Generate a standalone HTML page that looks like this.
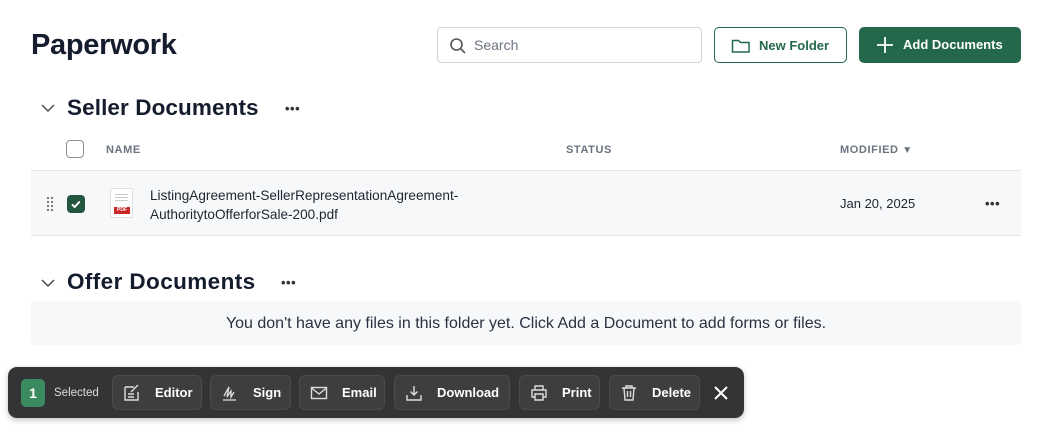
<!DOCTYPE html>
<html><head><meta charset="utf-8"><style>
*{box-sizing:border-box;margin:0;padding:0}
body{width:1051px;height:439px;background:#fff;font-family:"Liberation Sans",sans-serif;color:#1a2233;position:relative;overflow:hidden}
.a{position:absolute}
h1{position:absolute;left:31px;top:29px;font-size:29px;font-weight:600;letter-spacing:-0.3px;color:#141c2e}
.search{left:437px;top:27px;width:265px;height:36px;border:1px solid #d0d4da;border-radius:4px}
.search span{position:absolute;left:36px;top:9px;font-size:14px;color:#6b7280}
.nf{left:714px;top:27px;width:133px;height:36px;border:1px solid #23684a;border-radius:5px;color:#23684a;font-size:13px;font-weight:bold}
.ad{left:859px;top:27px;width:162px;height:36px;background:#23684a;border-radius:5px;color:#fff;font-size:13px;font-weight:bold}
.sec{font-size:22.5px;font-weight:600;color:#141c2e}
.hdr{font-size:11px;color:#6b7280;font-weight:bold;letter-spacing:0.6px}
.row{left:31px;top:170px;width:990px;height:66px;background:#f7f8fa;border-top:1px solid #e5e7eb;border-bottom:1px solid #e5e7eb}
.empty{left:31px;top:301px;width:990px;height:44px;background:#f7f8fa;border-radius:4px;font-size:16px;color:#2a3140;text-align:center;line-height:46px}
.bar{left:8px;top:367px;width:736px;height:51px;background:#333436;border-radius:9px;box-shadow:0 2px 6px rgba(0,0,0,.25)}
.btn{position:absolute;top:8px;height:35px;background:#3d3e40;border:1px solid #4a4b4d;border-radius:6px;color:#fff;font-size:13px;font-weight:bold;display:flex;align-items:center}
.btn svg{margin-left:10px;margin-right:14px}
.dots{font-size:13px;font-weight:bold;color:#333;letter-spacing:0.5px}
</style></head><body>
<h1>Paperwork</h1>
<div class="a search"><svg class="a" style="left:11px;top:9px" width="18" height="18" viewBox="0 0 18 18" fill="none" stroke="#555" stroke-width="1.6"><circle cx="7.5" cy="7.5" r="5.5"/><path d="M11.5 11.5l4.5 4.5"/></svg><span>Search</span></div>
<div class="a nf"><svg class="a" style="left:16px;top:10px" width="20" height="16" viewBox="0 0 20 16" fill="none" stroke="#23684a" stroke-width="1.5"><path d="M1.5 2.5h6l2 2h8.5v9.5h-16.5z"/></svg><span class="a" style="left:44px;top:10px">New Folder</span></div>
<div class="a ad"><svg class="a" style="left:17px;top:9px" width="18" height="18" viewBox="0 0 18 18" stroke="#fff" stroke-width="1.8"><path d="M9 1v16M1 9h16"/></svg><span class="a" style="left:44px;top:10px">Add Documents</span></div>

<svg class="a" style="left:41px;top:103px" width="14" height="10" viewBox="0 0 14 10" fill="none" stroke="#444" stroke-width="1.4"><path d="M1 2l6 6 6-6"/></svg>
<div class="a sec" style="left:67px;top:95px;letter-spacing:0.1px">Seller Documents</div>
<div class="a dots" style="left:285px;top:101px">•••</div>

<div class="a" style="left:66px;top:140px;width:18px;height:18px;border:1.5px solid #8a909a;border-radius:4px"></div>
<div class="a hdr" style="left:106px;top:144px">NAME</div>
<div class="a hdr" style="left:566px;top:144px">STATUS</div>
<div class="a hdr" style="left:840px;top:144px">MODIFIED <span style="font-size:10px">▼</span></div>

<div class="a row"></div>
<div class="a" style="left:46px;top:196px;width:8px;height:16px;background:radial-gradient(circle,#777 1px,transparent 1.3px) 0 0/4px 4px"></div>
<div class="a" style="left:67px;top:195px;width:18px;height:18px;background:#23553f;border-radius:4px"><svg width="18" height="18" viewBox="0 0 18 18" fill="none" stroke="#fff" stroke-width="2"><path d="M5 9.5l2.7 2.5 5-5.5"/></svg></div>
<div class="a" style="left:110px;top:188px;width:23px;height:30px;background:#fff;border:1px solid #e0e0e0;border-radius:2px">
<div class="a" style="left:4px;top:5px;width:13px;height:8px;background:repeating-linear-gradient(#ccc 0 1px,transparent 1px 3px)"></div>
<div class="a" style="left:3px;top:18px;width:16px;height:7px;background:#c62828;color:#fff;font-size:5px;text-align:center;line-height:7px;font-weight:bold">PDF</div></div>
<div class="a" style="left:150px;top:186px;font-size:13.6px;line-height:19px;color:#1f2530">ListingAgreement-SellerRepresentationAgreement-<br>AuthoritytoOfferforSale-200.pdf</div>
<div class="a" style="left:840px;top:196px;font-size:13px;color:#1f2530">Jan 20, 2025</div>
<div class="a dots" style="left:985px;top:196px">•••</div>

<svg class="a" style="left:41px;top:278px" width="14" height="10" viewBox="0 0 14 10" fill="none" stroke="#444" stroke-width="1.4"><path d="M1 2l6 6 6-6"/></svg>
<div class="a sec" style="left:67px;top:269px;letter-spacing:0.4px">Offer Documents</div>
<div class="a dots" style="left:281px;top:275px">•••</div>
<div class="a empty">You don't have any files in this folder yet. Click Add a Document to add forms or files.</div>

<div class="a bar">
<div class="a" style="left:13px;top:12px;width:24px;height:28px;background:#3c8a5f;border-radius:5px;color:#fff;font-size:14px;font-weight:bold;text-align:center;line-height:28px">1</div>
<div class="a" style="left:46px;top:20px;color:#ddd;font-size:11.5px">Selected</div>
<div class="btn" style="left:104px;width:90px"><svg width="18" height="18" viewBox="0 0 18 18" fill="none" stroke="#ddd" stroke-width="1.4"><path d="M2 3h9M2 3v13h13V8M5 10h6M5 13h6M8 8l7-7"/></svg>Editor</div>
<div class="btn" style="left:202px;width:81px"><svg width="18" height="18" viewBox="0 0 18 18" fill="none" stroke="#ddd" stroke-width="1.3"><path d="M3 12l5-9-2 10 4-6v6l3-5M2 16h13"/></svg>Sign</div>
<div class="btn" style="left:291px;width:86px"><svg width="18" height="18" viewBox="0 0 18 18" fill="none" stroke="#ddd" stroke-width="1.4"><rect x="1.5" y="3.5" width="15" height="11"/><path d="M1.5 4l7.5 6 7.5-6"/></svg>Email</div>
<div class="btn" style="left:386px;width:116px"><svg width="18" height="18" viewBox="0 0 18 18" fill="none" stroke="#ddd" stroke-width="1.4"><path d="M9 2v9M5.5 7.5L9 11l3.5-3.5M2 11v5h14v-5"/></svg>Download</div>
<div class="btn" style="left:511px;width:81px"><svg width="18" height="18" viewBox="0 0 18 18" fill="none" stroke="#ddd" stroke-width="1.4"><path d="M5 6V2h8v4M5 13H2V6h14v7h-3M5 10h8v6H5z"/></svg>Print</div>
<div class="btn" style="left:601px;width:91px"><svg width="18" height="18" viewBox="0 0 18 18" fill="none" stroke="#ddd" stroke-width="1.4"><path d="M2 4h14M6 4V2h6v2M4 4l1 12h8l1-12M7.5 7v6M10.5 7v6"/></svg>Delete</div>
<svg class="a" style="left:706px;top:19px" width="14" height="14" viewBox="0 0 14 14" stroke="#fff" stroke-width="2"><path d="M1 1l12 12M13 1L1 13"/></svg>
</div>
</body></html>
